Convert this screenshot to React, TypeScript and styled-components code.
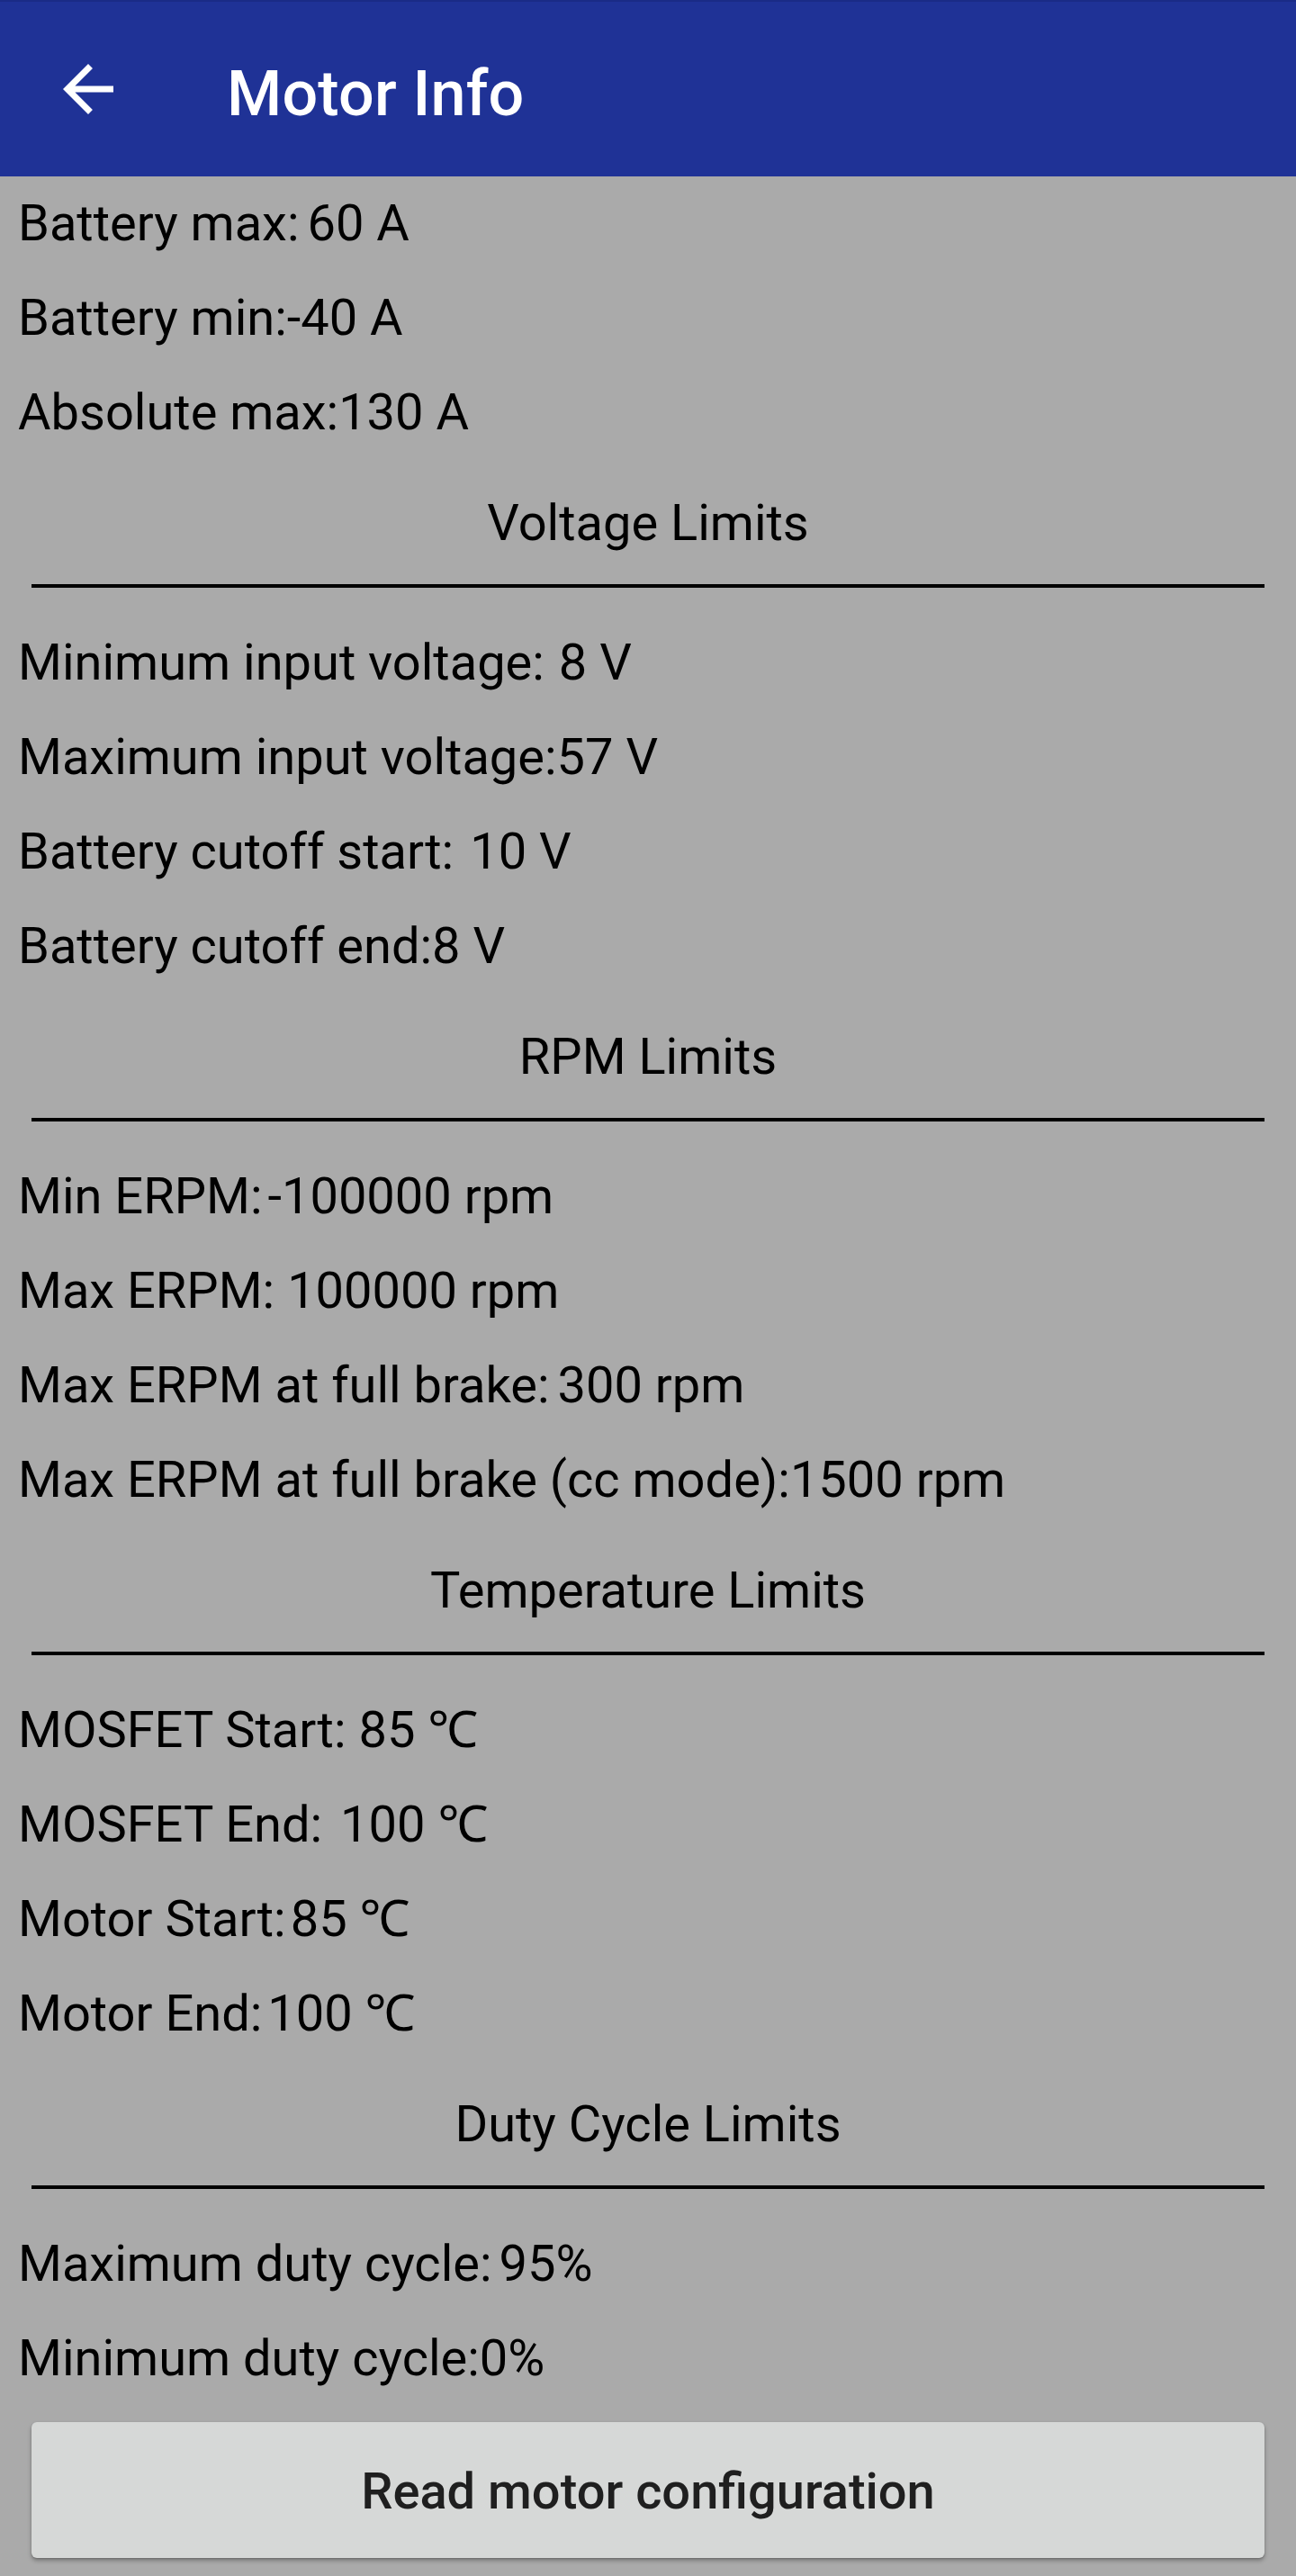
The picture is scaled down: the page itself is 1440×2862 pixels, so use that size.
import React from "react";
import styled, { createGlobalStyle } from "styled-components";

const GlobalStyle = createGlobalStyle`
  html, body {
    margin: 0;
    padding: 0;
    background: #aaaaaa;
  }
  body {
    font-family: Roboto, "Noto Sans", "DejaVu Sans", sans-serif;
    color: #000;
  }
  * {
    box-sizing: border-box;
  }
`;

type Row = { label: string; value: string; gap?: number };
type Section = { title?: string; rows: Row[] };

const sections: Section[] = [
  {
    rows: [
      { label: "Battery max:", value: "60 A", gap: 9 },
      { label: "Battery min:", value: "-40 A" },
      { label: "Absolute max:", value: "130 A" },
    ],
  },
  {
    title: "Voltage Limits",
    rows: [
      { label: "Minimum input voltage:", value: "8 V", gap: 16 },
      { label: "Maximum input voltage:", value: "57 V" },
      { label: "Battery cutoff start:", value: "10 V", gap: 18 },
      { label: "Battery cutoff end:", value: "8 V" },
    ],
  },
  {
    title: "RPM Limits",
    rows: [
      { label: "Min ERPM:", value: "-100000 rpm", gap: 6 },
      { label: "Max ERPM:", value: "100000 rpm", gap: 14 },
      { label: "Max ERPM at full brake:", value: "300 rpm", gap: 9 },
      { label: "Max ERPM at full brake (cc mode):", value: "1500 rpm" },
    ],
  },
  {
    title: "Temperature Limits",
    rows: [
      { label: "MOSFET Start:", value: "85 ℃", gap: 14 },
      { label: "MOSFET End:", value: "100 ℃", gap: 20 },
      { label: "Motor Start:", value: "85 ℃", gap: 5 },
      { label: "Motor End:", value: "100 ℃", gap: 6 },
    ],
  },
  {
    title: "Duty Cycle Limits",
    rows: [
      { label: "Maximum duty cycle:", value: "95%", gap: 8 },
      { label: "Minimum duty cycle:", value: "0%" },
    ],
  },
];

const Screen = styled.div`
  min-height: 2862px;
  background: #aaaaaa;
  padding-bottom: 20px;
`;

const AppBar = styled.header`
  height: 196px;
  background: #1f3296;
  border-top: 2px solid #1a2b86;
  display: flex;
  align-items: center;
`;

const NavButton = styled.button`
  width: 84px;
  height: 84px;
  margin-left: 56px;
  padding: 0;
  border: none;
  background: transparent;
  display: flex;
  align-items: center;
  justify-content: center;
  cursor: pointer;

  svg {
    width: 84px;
    height: 84px;
    fill: #ffffff;
  }
`;

const Title = styled.h1`
  margin: 9px 0 0 112px;
  font-size: 70px;
  font-weight: 500;
  color: #ffffff;
  letter-spacing: 0.2px;
`;

const Content = styled.main`
  display: flex;
  flex-direction: column;
`;

const InfoRow = styled.div`
  height: 105px;
  line-height: 105px;
  font-size: 56px;
  padding-left: 20px;
  white-space: nowrap;
`;

const Value = styled.span<{ $gap: number }>`
  margin-left: ${(p) => p.$gap}px;
`;

const SectionTitle = styled.div`
  padding-top: 18px;
  line-height: 105px;
  font-size: 56px;
  text-align: center;
`;

const Divider = styled.hr`
  height: 4px;
  margin: 15px 35px 31px;
  border: none;
  background: #000;
`;

const ActionButton = styled.button`
  margin: 18px 35px 0;
  height: 151px;
  padding-top: 4px;
  border: none;
  border-radius: 6px;
  background: #d6d8d7;
  box-shadow: 0 3px 5px rgba(0, 0, 0, 0.28), 0 1px 2px rgba(0, 0, 0, 0.18);
  font-family: Roboto, "Noto Sans", sans-serif;
  font-size: 56px;
  font-weight: 500;
  color: #1f1f1f;
  cursor: pointer;
`;

const BackArrow = () => (
  <svg viewBox="0 0 24 24" aria-hidden="true">
    <path d="M20 11H7.83l5.59-5.59L12 4l-8 8 8 8 1.41-1.41L7.83 13H20v-2z" />
  </svg>
);

export default function App() {
  return (
    <>
      <GlobalStyle />
      <Screen>
        <AppBar>
          <NavButton aria-label="Back">
            <BackArrow />
          </NavButton>
          <Title>Motor Info</Title>
        </AppBar>
        <Content>
          {sections.map((section, i) => (
            <React.Fragment key={i}>
              {section.title && (
                <>
                  <SectionTitle>{section.title}</SectionTitle>
                  <Divider />
                </>
              )}
              {section.rows.map((row) => (
                <InfoRow key={row.label}>
                  {row.label}
                  <Value $gap={row.gap ?? 0}>{row.value}</Value>
                </InfoRow>
              ))}
            </React.Fragment>
          ))}
          <ActionButton>Read motor configuration</ActionButton>
        </Content>
      </Screen>
    </>
  );
}
